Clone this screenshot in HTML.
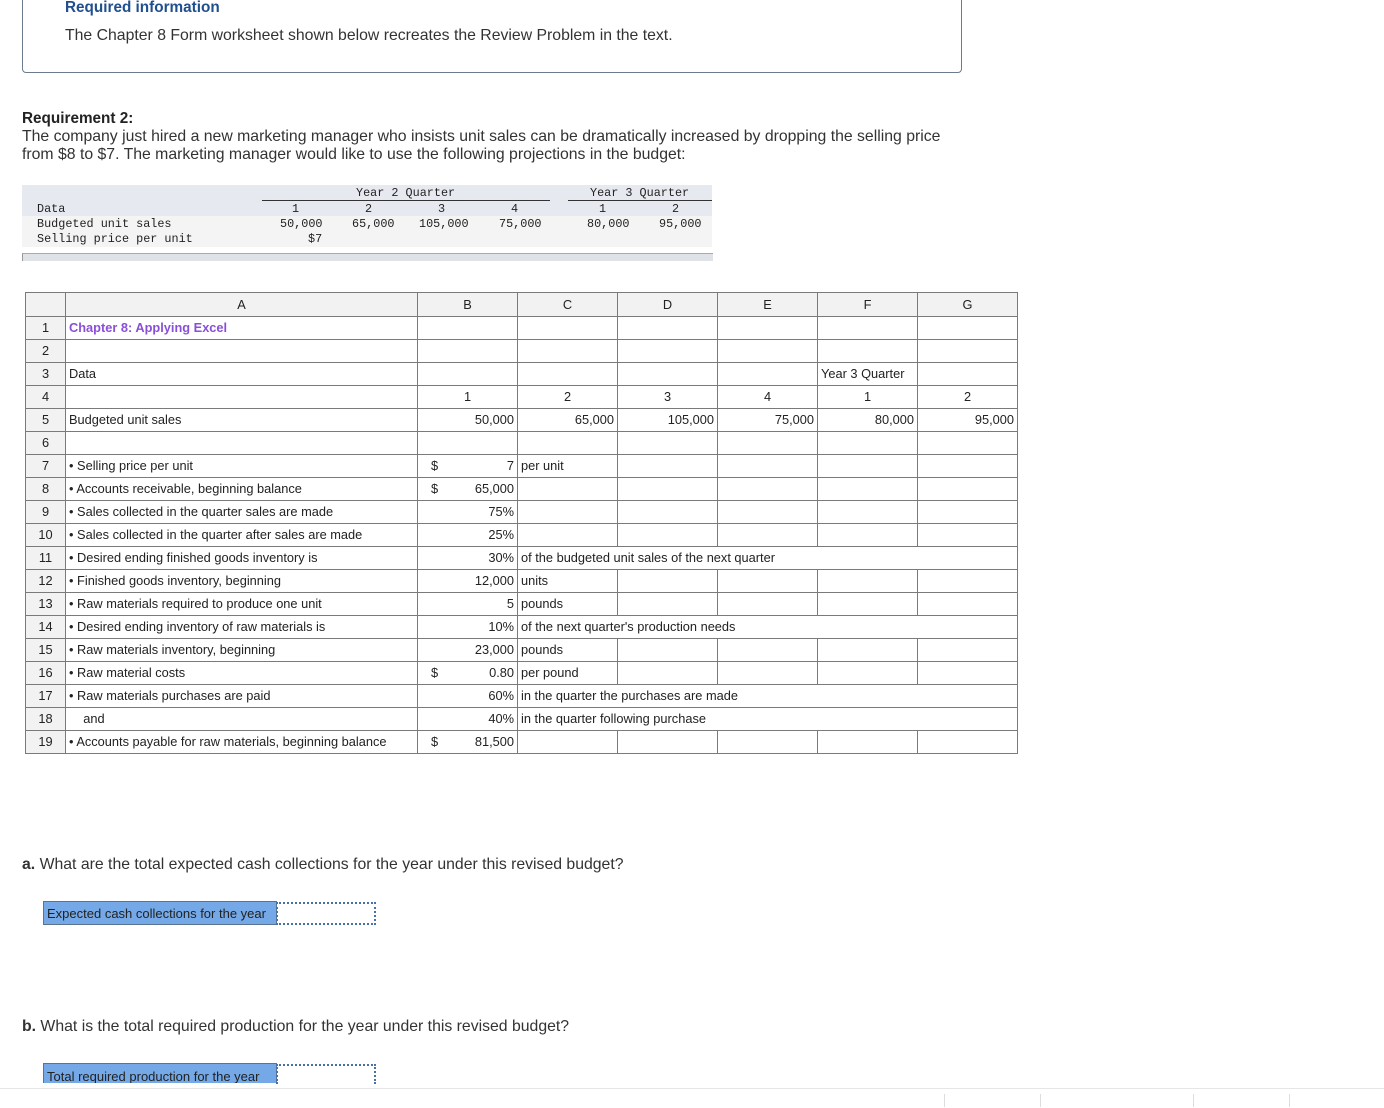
<!DOCTYPE html>
<html><head><meta charset="utf-8"><style>
body{margin:0;background:#fff;font-family:"Liberation Sans",Arial,sans-serif;color:#222;width:1384px;height:1107px;overflow:hidden;position:relative}
.abs{position:absolute}
.box{left:22px;top:-10px;width:938px;height:81px;border:1px solid #6b7a8f;border-radius:4px}
.mono{font-family:"Liberation Mono",monospace;font-size:11.8px;color:#222}
table.x{position:absolute;left:25px;top:292px;border-collapse:collapse;font-size:12.8px;table-layout:fixed}
table.x td{border:1px solid #7a7a7a;height:22px;padding:0 3px;line-height:14px;white-space:nowrap;overflow:visible}
table.x td.n{background:#f2f2f2;text-align:center;padding:0}
table.x tr.h td{background:#f2f2f2;text-align:center;height:23px}
.r{text-align:right}.c{text-align:center}
.b{display:flex;justify-content:space-between;padding-left:10px!important}
</style></head><body>
<div class="abs box"></div>
<div class="abs" style="left:65px;top:-1px;font-size:15.3px;font-weight:bold;color:#1f4f8f">Required information</div>
<div class="abs" style="left:65px;top:27px;font-size:15.8px;color:#333">The Chapter 8 Form worksheet shown below recreates the Review Problem in the text.</div>
<div class="abs" style="left:22px;top:110px;font-size:15.3px;font-weight:bold;color:#222">Requirement 2:</div>
<div class="abs" style="left:22px;top:128px;font-size:15.8px;line-height:18px;color:#333">The company just hired a new marketing manager who insists unit sales can be dramatically increased by dropping the selling price<br>from $8 to $7. The marketing manager would like to use the following projections in the budget:</div>

<div class="abs" style="left:22px;top:185px;width:690px;height:31px;background:#e6e9ef"></div>
<div class="abs" style="left:22px;top:216px;width:690px;height:31px;background:#f4f4f4"></div>
<div class="abs" style="left:22px;top:253px;width:690px;height:7px;background:#dfe2e7;border-left:1px solid #999;border-top:1px solid #aaa"></div>
<div class="abs" style="left:262px;top:200px;width:288px;border-top:1px solid #333"></div>
<div class="abs" style="left:568px;top:200px;width:144px;border-top:1px solid #333"></div>
<div class="abs mono" style="left:356px;top:186px">Year 2 Quarter</div>
<div class="abs mono" style="left:590px;top:186px">Year 3 Quarter</div>
<div class="abs mono" style="left:37px;top:202px">Data</div>
<div class="abs mono" style="left:37px;top:217px">Budgeted unit sales</div>
<div class="abs mono" style="left:37px;top:232px">Selling price per unit</div>
<div class="abs mono" style="left:292px;top:202px">1</div>
<div class="abs mono" style="left:365px;top:202px">2</div>
<div class="abs mono" style="left:438px;top:202px">3</div>
<div class="abs mono" style="left:511px;top:202px">4</div>
<div class="abs mono" style="left:599px;top:202px">1</div>
<div class="abs mono" style="left:672px;top:202px">2</div>
<div class="abs mono" style="left:280px;top:217px">50,000</div>
<div class="abs mono" style="left:352px;top:217px">65,000</div>
<div class="abs mono" style="left:419px;top:217px">105,000</div>
<div class="abs mono" style="left:499px;top:217px">75,000</div>
<div class="abs mono" style="left:587px;top:217px">80,000</div>
<div class="abs mono" style="left:659px;top:217px">95,000</div>
<div class="abs mono" style="left:308px;top:232px">$7</div>

<table class="x">
<colgroup><col style="width:40px"><col style="width:352px"><col style="width:100px"><col style="width:100px"><col style="width:100px"><col style="width:100px"><col style="width:100px"><col style="width:100px"><col style="width:100px"></colgroup>
<tr class="h"><td></td><td>A</td><td>B</td><td>C</td><td>D</td><td>E</td><td>F</td><td>G</td></tr>
<tr><td class="n">1</td><td style="color:#8a4fd8;font-weight:bold">Chapter 8: Applying Excel</td><td></td><td></td><td></td><td></td><td></td><td></td></tr>
<tr><td class="n">2</td><td></td><td></td><td></td><td></td><td></td><td></td><td></td></tr>
<tr><td class="n">3</td><td>Data</td><td></td><td></td><td></td><td></td><td>Year 3 Quarter</td><td></td></tr>
<tr><td class="n">4</td><td></td><td class="c">1</td><td class="c">2</td><td class="c">3</td><td class="c">4</td><td class="c">1</td><td class="c">2</td></tr>
<tr><td class="n">5</td><td>Budgeted unit sales</td><td class="r">50,000</td><td class="r">65,000</td><td class="r">105,000</td><td class="r">75,000</td><td class="r">80,000</td><td class="r">95,000</td></tr>
<tr><td class="n">6</td><td></td><td></td><td></td><td></td><td></td><td></td><td></td></tr>
<tr><td class="n">7</td><td>• Selling price per unit</td><td><div class="b"><span>$</span><span>7</span></div></td><td>per unit</td><td></td><td></td><td></td><td></td></tr>
<tr><td class="n">8</td><td>• Accounts receivable, beginning balance</td><td><div class="b"><span>$</span><span>65,000</span></div></td><td></td><td></td><td></td><td></td><td></td></tr>
<tr><td class="n">9</td><td>• Sales collected in the quarter sales are made</td><td class="r">75%</td><td></td><td></td><td></td><td></td><td></td></tr>
<tr><td class="n">10</td><td>• Sales collected in the quarter after sales are made</td><td class="r">25%</td><td></td><td></td><td></td><td></td><td></td></tr>
<tr><td class="n">11</td><td>• Desired ending finished goods inventory is</td><td class="r">30%</td><td colspan="5">of the budgeted unit sales of the next quarter</td></tr>
<tr><td class="n">12</td><td>• Finished goods inventory, beginning</td><td class="r">12,000</td><td>units</td><td></td><td></td><td></td><td></td></tr>
<tr><td class="n">13</td><td>• Raw materials required to produce one unit</td><td class="r">5</td><td>pounds</td><td></td><td></td><td></td><td></td></tr>
<tr><td class="n">14</td><td>• Desired ending inventory of raw materials is</td><td class="r">10%</td><td colspan="5">of the next quarter's production needs</td></tr>
<tr><td class="n">15</td><td>• Raw materials inventory, beginning</td><td class="r">23,000</td><td>pounds</td><td></td><td></td><td></td><td></td></tr>
<tr><td class="n">16</td><td>• Raw material costs</td><td><div class="b"><span>$</span><span>0.80</span></div></td><td>per pound</td><td></td><td></td><td></td><td></td></tr>
<tr><td class="n">17</td><td>• Raw materials purchases are paid</td><td class="r">60%</td><td colspan="5">in the quarter the purchases are made</td></tr>
<tr><td class="n">18</td><td>&nbsp;&nbsp;&nbsp;&nbsp;and</td><td class="r">40%</td><td colspan="5">in the quarter following purchase</td></tr>
<tr><td class="n">19</td><td>• Accounts payable for raw materials, beginning balance</td><td><div class="b"><span>$</span><span>81,500</span></div></td><td></td><td></td><td></td><td></td><td></td></tr>
</table>

<div class="abs" style="left:22px;top:856px;font-size:15.8px;color:#333"><b>a.</b> What are the total expected cash collections for the year under this revised budget?</div>
<div class="abs" style="left:43px;top:901px;width:234px;height:24px;background:#74a8e6;border:1px solid #5a7390;font-size:13px;line-height:23px;padding-left:3px;box-sizing:border-box;color:#222">Expected cash collections for the year</div>
<div class="abs" style="left:276px;top:902px;width:100px;height:23px;border:2px dotted #4a70a8;box-sizing:border-box"></div>
<div class="abs" style="left:22px;top:1018px;font-size:15.8px;color:#333"><b>b.</b> What is the total required production for the year under this revised budget?</div>
<div class="abs" style="left:43px;top:1063px;width:234px;height:20px;background:#74a8e6;border:1px solid #5a7390;border-bottom:none;font-size:13px;line-height:26px;padding-left:3px;box-sizing:border-box;color:#222;overflow:hidden">Total required production for the year</div>
<div class="abs" style="left:276px;top:1064px;width:100px;height:20px;border:2px dotted #4a70a8;border-bottom:none;box-sizing:border-box"></div>
<div class="abs" style="left:0;top:1088px;width:1384px;height:19px;background:#fff;border-top:1px solid #e6e6e6"></div>
<div class="abs" style="left:944px;top:1094px;height:13px;border-left:1px solid #ddd"></div>
<div class="abs" style="left:1040px;top:1094px;height:13px;border-left:1px solid #ddd"></div>
<div class="abs" style="left:1193px;top:1094px;height:13px;border-left:1px solid #ddd"></div>
<div class="abs" style="left:1289px;top:1094px;height:13px;border-left:1px solid #ddd"></div>
</body></html>
